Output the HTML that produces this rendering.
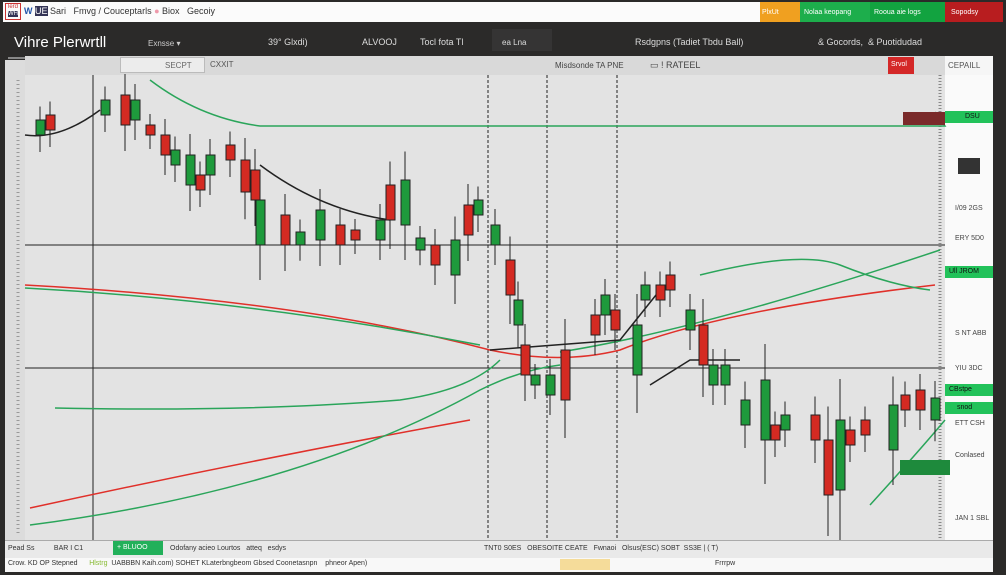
<!DOCTYPE html>
<html><head><meta charset="utf-8"><style>
*{margin:0;padding:0;box-sizing:border-box}
body{width:1006px;height:575px;background:#2b2a29;font-family:"Liberation Sans",sans-serif;overflow:hidden;position:relative}
.a{position:absolute;white-space:nowrap}
</style></head><body>
<div class="a" style="left:3px;top:2px;width:1000px;height:20px;background:#fbfbfb"></div>
<div class="a" style="left:5px;top:3px;width:16px;height:17px;border:1px solid #c33;font-size:6px;color:#c33;line-height:7px;text-align:center">lerd<br><span style="background:#335;color:#fff">WH</span></div>
<div class="a" style="left:24px;top:6px;font-size:9px;color:#333"><b style="color:#25a">W</b> <span style="background:#335;color:#fff">UE</span> Sari &nbsp; Fmvg / Couceptarls <span style="color:#e9a">●</span> Biox &nbsp; Gecoiy</div>
<div class="a" style="left:760px;top:2px;width:40px;height:20px;background:#f0a020;font-size:7px;color:#fff;padding:7px 2px">PlxUt</div>
<div class="a" style="left:800px;top:2px;width:70px;height:20px;background:#1dae4c;font-size:7px;color:#fff;padding:7px 4px">Nolaa keopang</div>
<div class="a" style="left:870px;top:2px;width:75px;height:20px;background:#12a340;font-size:7px;color:#fff;padding:7px 4px">Rooua aie logs</div>
<div class="a" style="left:945px;top:2px;width:58px;height:20px;background:#b81d1f;font-size:7px;color:#fff;padding:7px 6px">Sopodsy</div>
<div class="a" style="left:14px;top:34px;font-size:15px;color:#fff">Vihre Plerwrtll</div>
<div class="a" style="left:148px;top:39px;font-size:8px;color:#ccc">Exnsse ▾</div>
<div class="a" style="left:268px;top:37px;font-size:9px;color:#ddd">39° Glxdi)</div>
<div class="a" style="left:362px;top:37px;font-size:9px;color:#ddd">ALVOOJ</div>
<div class="a" style="left:420px;top:37px;font-size:9px;color:#ddd">Tocl fota Tl</div>
<div class="a" style="left:492px;top:29px;width:60px;height:22px;background:#353434"></div>
<div class="a" style="left:502px;top:38px;font-size:8px;color:#ddd">ea Lna</div>
<div class="a" style="left:635px;top:37px;font-size:9px;color:#ddd">Rsdgpns (Tadiet Tbdu Ball)</div>
<div class="a" style="left:818px;top:37px;font-size:9px;color:#ddd">&amp; Gocords, &nbsp;&amp; Puotidudad</div>
<div class="a" style="left:8px;top:57px;width:30px;height:2px;background:#888"></div>
<div class="a" style="left:25px;top:56px;width:920px;height:19px;background:#d9d9d9"></div>
<div class="a" style="left:120px;top:57px;width:85px;height:16px;background:#ececec;border:1px solid #bbb;font-size:8px;color:#666;padding:3px 0 0 44px">SECPT</div>
<div class="a" style="left:210px;top:60px;font-size:8px;color:#555">CXXIT</div>
<div class="a" style="left:555px;top:61px;font-size:8px;color:#444">Misdsonde TA PNE</div>
<div class="a" style="left:650px;top:60px;font-size:9px;color:#444">▭ ! RATEEL</div>
<div class="a" style="left:888px;top:57px;width:26px;height:17px;background:#d42828;font-size:7px;color:#fff;padding:4px 3px">Srvol</div>
<div class="a" style="left:945px;top:56px;width:48px;height:19px;background:#f6f6f6;font-size:8px;color:#555;padding:5px 3px">CEPAILL</div>
<div class="a" style="left:5px;top:60px;width:20px;height:480px;background:#dcdcdc"></div>
<div class="a" style="left:993px;top:56px;width:13px;height:519px;background:#2b2a29"></div>
<div class="a" style="left:945px;top:75px;width:48px;height:465px;background:#fafafa"></div>
<svg class="a" style="left:0;top:0" width="1006" height="575">
<rect x="25" y="75" width="920" height="465" fill="#e3e3e3"/>
<line x1="940" y1="75" x2="940" y2="540" stroke="#888" stroke-dasharray="1 2" stroke-width="3"/>
<line x1="18" y1="80" x2="18" y2="535" stroke="#999" stroke-dasharray="1 3" stroke-width="3"/>
<g stroke="#222" stroke-width="1">
<line x1="25" y1="245" x2="945" y2="245"/><line x1="25" y1="368" x2="945" y2="368"/>
<line x1="93" y1="75" x2="93" y2="540"/><line x1="488" y1="75" x2="488" y2="540" stroke-dasharray="3 2"/>
<line x1="547" y1="75" x2="547" y2="540" stroke-dasharray="3 2"/><line x1="617" y1="75" x2="617" y2="540" stroke-dasharray="3 2"/>
</g>
<g fill="none" stroke-width="1.5">
<path d="M150 80 Q200 118 260 126 L945 126 L935 112" stroke="#2aa55a"/>
<path d="M25 285 Q300 300 490 350 Q560 365 620 350 Q720 310 935 285" stroke="#e0302a"/>
<path d="M25 288 Q250 300 480 345" stroke="#2aa55a"/>
<path d="M560 352 Q700 330 940 250" stroke="#2aa55a"/>
<path d="M700 275 Q800 250 840 265 Q890 285 930 290" stroke="#2aa55a"/>
<path d="M55 408 Q250 412 400 400 Q470 390 500 360" stroke="#2aa55a"/>
<path d="M30 508 Q250 460 470 420" stroke="#e0302a"/>
<path d="M30 525 Q300 490 480 390 Q520 370 560 365" stroke="#2aa55a"/>
<path d="M870 505 Q920 450 945 420" stroke="#2aa55a"/>
<path d="M25 135 Q60 140 100 110 M260 165 Q320 210 390 220 M490 350 L620 340 L660 290 M650 385 L690 360 L740 360" stroke="#222"/>
</g>
<g id="c" stroke="#222" stroke-width="1">
<!-- x, top, bottom, color -->
</g>
</svg>
<div class="a" style="left:903px;top:112px;width:42px;height:13px;background:#7a2a2a"></div>
<div class="a" style="left:945px;top:111px;width:48px;height:12px;background:#22c25a;font-size:7px;color:#111;padding:2px 20px">DSU</div>
<div class="a" style="left:958px;top:158px;width:22px;height:16px;background:#333"></div>
<div class="a" style="left:945px;top:266px;width:48px;height:12px;background:#22c25a;font-size:7px;color:#111;padding:2px 4px">Ull JROM</div>
<div class="a" style="left:945px;top:384px;width:48px;height:12px;background:#22c25a;font-size:7px;color:#111;padding:2px 4px">CBstpe</div>
<div class="a" style="left:945px;top:402px;width:48px;height:12px;background:#22c25a;font-size:7px;color:#111;padding:2px 12px">snod</div>
<div class="a" style="left:900px;top:460px;width:50px;height:15px;background:#1e8a3c"></div>
<div class="a" style="left:955px;top:205px;font-size:7px;color:#444">I/09 2GS</div>
<div class="a" style="left:955px;top:235px;font-size:7px;color:#444">ERY 5D0</div>
<div class="a" style="left:955px;top:330px;font-size:7px;color:#444">S NT ABB</div>
<div class="a" style="left:955px;top:365px;font-size:7px;color:#444">YIU 3DC</div>
<div class="a" style="left:955px;top:420px;font-size:7px;color:#444">ETT CSH</div>
<div class="a" style="left:955px;top:452px;font-size:7px;color:#444">Conlased</div>
<div class="a" style="left:955px;top:515px;font-size:7px;color:#444">JAN 1 SBL</div>
<div class="a" style="left:5px;top:540px;width:988px;height:18px;background:#e9e9e9;border-top:1px solid #aaa"></div>
<div class="a" style="left:113px;top:541px;width:50px;height:14px;background:#22b05a;font-size:7px;color:#fff;padding:3px 4px">+ BLUOO</div>
<div class="a" style="left:8px;top:545px;font-size:7px;color:#333">Pead Ss &nbsp;&nbsp;&nbsp;&nbsp;&nbsp;&nbsp;&nbsp;&nbsp; BAR I C1</div>
<div class="a" style="left:170px;top:545px;font-size:7px;color:#333">Odofany acieo Lourtos &nbsp; atteq &nbsp; esdys</div>
<div class="a" style="left:484px;top:545px;font-size:7px;color:#333">TNT0 S0ES &nbsp; OBESOITE CEATE &nbsp; Fwnaoi &nbsp; Olsus(ESC) SOBT &nbsp;SS3E | ( T)</div>
<div class="a" style="left:5px;top:558px;width:988px;height:14px;background:#f8f8f8"></div>
<div class="a" style="left:8px;top:560px;font-size:7px;color:#333">Crow. KD OP Stepned &nbsp;&nbsp;&nbsp;&nbsp; <span style="color:#8b3">Hlstrg</span> &nbsp;UABBBN Kaih.com) SOHET KLaterbngbeom Gbsed Coonetasnpn &nbsp;&nbsp; phneor Apen)</div>
<div class="a" style="left:560px;top:559px;width:50px;height:11px;background:#f5dc9a"></div>
<div class="a" style="left:715px;top:560px;font-size:7px;color:#333">Frrrpw</div>
<script>
var d=[[40,120,135,'g'],[50,115,130,'r'],[105,100,115,'g'],[125,95,125,'r'],[135,100,120,'g'],[150,125,135,'r'],[165,135,155,'r'],[175,150,165,'g'],[190,155,185,'g'],[200,175,190,'r'],[210,155,175,'g'],[230,145,160,'r'],[245,160,192,'r'],[255,170,200,'r'],[260,200,245,'g'],[285,215,245,'r'],[300,232,245,'g'],[320,210,240,'g'],[340,225,245,'r'],[355,230,240,'r'],[380,220,240,'g'],[390,185,220,'r'],[405,180,225,'g'],[420,238,250,'g'],[435,245,265,'r'],[455,240,275,'g'],[468,205,235,'r'],[478,200,215,'g'],[495,225,245,'g'],[510,260,295,'r'],[518,300,325,'g'],[525,345,375,'r'],[535,375,385,'g'],[550,375,395,'g'],[565,350,400,'r'],[595,315,335,'r'],[605,295,315,'g'],[615,310,330,'r'],[637,325,375,'g'],[645,285,300,'g'],[660,285,300,'r'],[670,275,290,'r'],[690,310,330,'g'],[703,325,365,'r'],[713,365,385,'g'],[725,365,385,'g'],[745,400,425,'g'],[765,380,440,'g'],[775,425,440,'r'],[785,415,430,'g'],[815,415,440,'r'],[828,440,495,'r'],[840,420,490,'g'],[850,430,445,'r'],[865,420,435,'r'],[893,405,450,'g'],[905,395,410,'r'],[920,390,410,'r'],[935,398,420,'g']];
var s='';d.forEach(function(c){var h=c[2]-c[1];s+='<line x1="'+c[0]+'" y1="'+(c[1]-h*0.5-6)+'" x2="'+c[0]+'" y2="'+(c[2]+h*0.6+8)+'"/><rect x="'+(c[0]-4)+'" y="'+c[1]+'" width="9" height="'+h+'" fill="'+(c[3]=='g'?'#1e9a3c':'#d42a22')+'"/>';});
document.getElementById('c').innerHTML=s;
</script>
</body></html>
